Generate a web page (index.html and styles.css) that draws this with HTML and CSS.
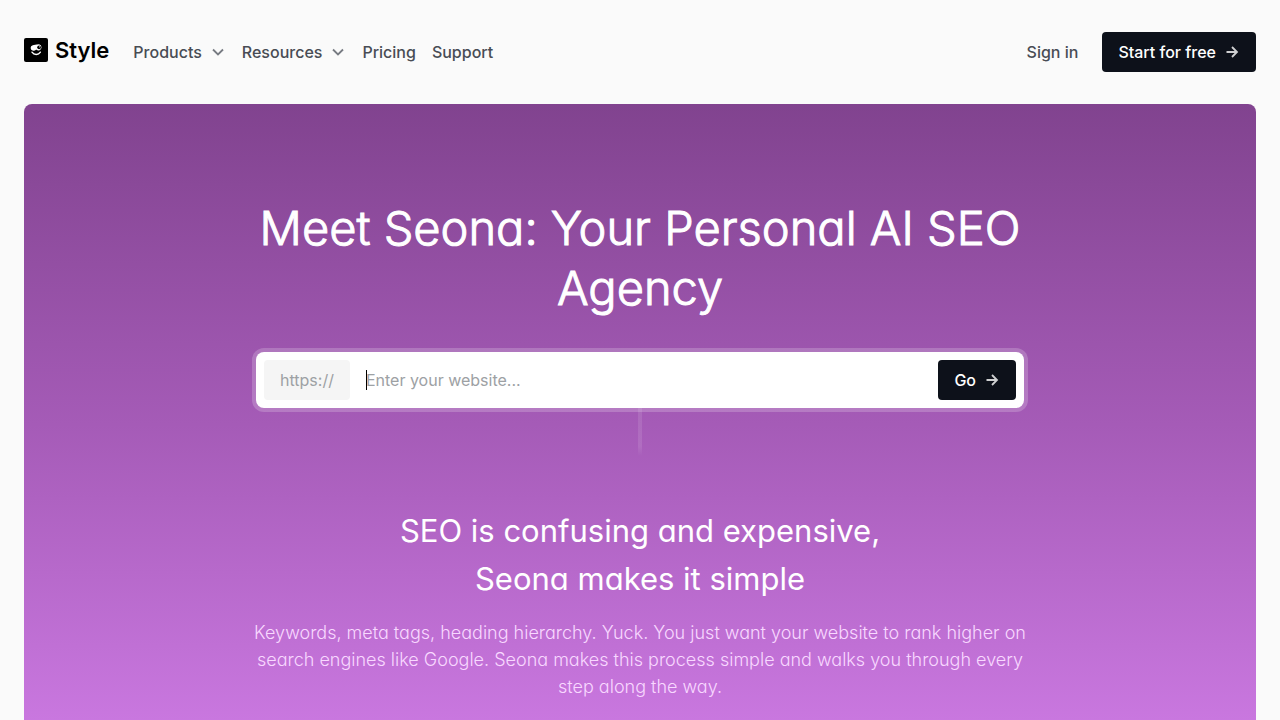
FILE: index.html
```html
<!DOCTYPE html>
<html lang="en">
<head>
<meta charset="utf-8">
<meta name="viewport" content="width=device-width, initial-scale=1">
<title>Style – Meet Seona</title>
<link rel="stylesheet" href="styles.css">
</head>
<body>
<header class="header">
  <a class="logo" href="#" aria-label="Style home">
    <svg class="logo-mark" viewBox="0 0 24 24" aria-hidden="true">
      <rect width="24" height="24" rx="2" fill="#000"/>
      <path d="M8.8 7.2C10.5 7.2 11.5 6.2 15 6.2A3.2 3.2 0 0 1 15.2 12.4C13.8 12.4 12.9 12 12.3 11.4C11.5 12.3 10.4 12.7 9 12.7A2.8 2.8 0 0 1 8.8 7.2Z" fill="#fff"/>
      <circle cx="15.1" cy="9.3" r="1.9" fill="#000"/>
      <circle cx="15.7" cy="8.8" r=".6" fill="#fff"/>
      <path d="M8 14.2C10 17.2 14.4 17.2 16.4 14.2" fill="none" stroke="#fff" stroke-width="1.4" stroke-linecap="round"/>
    </svg>
    <span class="logo-name">Style</span>
  </a>
  <nav class="nav" aria-label="Main">
    <button class="nav-item" type="button">Products
      <svg class="chevron" viewBox="0 0 16 16" aria-hidden="true"><path d="M3 5.5L8 10.5L13 5.5"/></svg>
    </button>
    <button class="nav-item" type="button">Resources
      <svg class="chevron" viewBox="0 0 16 16" aria-hidden="true"><path d="M3 5.5L8 10.5L13 5.5"/></svg>
    </button>
    <a class="nav-item" href="#">Pricing</a>
    <a class="nav-item" href="#">Support</a>
  </nav>
  <div class="account">
    <a class="nav-item" href="#">Sign in</a>
    <a class="button" href="#">Start for free
      <svg class="arrow" viewBox="0 0 16 16" aria-hidden="true"><path d="M2.5 8H13M8 3L13 8L8 13"/></svg>
    </a>
  </div>
</header>
<main class="hero">
  <div class="content">
    <h1 class="title">Meet Seona: Your Personal AI SEO Agency</h1>
    <form class="site-form">
      <label class="scheme" for="website">https://</label>
      <div class="field">
        <input class="website" id="website" type="text" placeholder="Enter your website...">
        <span class="caret"></span>
      </div>
      <button class="button" type="button">Go
        <svg class="arrow" viewBox="0 0 16 16" aria-hidden="true"><path d="M2.5 8H13M8 3L13 8L8 13"/></svg>
      </button>
    </form>
    <div class="connector"></div>
    <h2 class="subtitle">SEO is confusing and expensive,<br>Seona makes it simple</h2>
    <p class="description">Keywords, meta tags, heading hierarchy. Yuck. You just want your website to rank higher on search engines like Google. Seona makes this process simple and walks you through every step along the way.</p>
  </div>
</main>
</body>
</html>
```
FILE: styles.css
```css
* {
  box-sizing: border-box;
}

body {
  margin: 0;
  min-height: 100vh;
  display: flex;
  flex-direction: column;
  background: #fafafa;
  color: #484c54;
  font: 400 16px/24px Inter, "Liberation Sans", sans-serif;
}

a {
  color: inherit;
  text-decoration: none;
}

button,
input {
  font: inherit;
  border: 0;
  padding: 0;
  margin: 0;
  background: none;
}

.header {
  display: flex;
  align-items: center;
  gap: 24px;
  padding: 32px 24px;
}

.logo {
  display: flex;
  align-items: center;
  gap: 7px;
  color: #000;
}

.logo-mark {
  width: 24px;
  height: 24px;
  margin-bottom: 4px;
}

.logo-name {
  font-size: 22px;
  font-weight: 600;
  line-height: 24px;
  margin-bottom: 4px;
}

.nav {
  display: flex;
  gap: 16px;
}

.nav-item {
  display: flex;
  align-items: center;
  gap: 8px;
  color: #484c54;
  font-weight: 500;
}

.chevron,
.arrow {
  width: 16px;
  height: 16px;
  fill: none;
  stroke: #777b82;
  stroke-width: 1.8;
}

.account {
  display: flex;
  align-items: center;
  gap: 24px;
  margin-left: auto;
}

.button {
  display: flex;
  align-items: center;
  gap: 8px;
  height: 40px;
  padding: 0 16px;
  border-radius: 4px;
  background: #0d111a;
  color: #fff;
  font-weight: 500;
}

.arrow {
  stroke: #cfd0d2;
}

.hero {
  flex: 1;
  margin: 0 24px;
  padding: 94px 24px 20px;
  border-radius: 8px 8px 0 0;
  background: linear-gradient(#81438f, #a55bb7 52%, #c977df);
  color: #fff;
  text-align: center;
}

.content {
  max-width: 768px;
  margin: 0 auto;
}

.title {
  margin: 0 -8px;
  font-size: 47px;
  font-weight: 300;
  line-height: 60px;
  font-feature-settings: "cv11";
  -webkit-text-stroke: 1px #fff;
}

.site-form {
  display: flex;
  margin-top: 34px;
  padding: 8px;
  border-radius: 8px;
  background: #fff;
  box-shadow: 0 0 0 4px rgba(255, 255, 255, 0.2);
}

.scheme {
  padding: 8px 16px;
  border-radius: 4px;
  background: #f5f5f5;
  color: #9da1a4;
}

.field {
  position: relative;
  flex: 1;
  display: flex;
}

.website {
  width: 100%;
  padding: 8px 16px;
  outline: none;
}

.website::placeholder {
  color: #9da1a4;
  opacity: 1;
}

.caret {
  position: absolute;
  left: 16px;
  top: 10px;
  width: 1px;
  height: 20px;
  background: #000;
}

.connector {
  width: 4px;
  height: 48px;
  margin: 0 auto;
  background: linear-gradient(rgba(255, 255, 255, 0.1) 80%, rgba(255, 255, 255, 0));
}

.subtitle {
  margin: 51px 0 0;
  font-size: 31px;
  font-weight: 400;
  line-height: 48px;
  font-feature-settings: "cv11";
}

.description {
  margin: 16px -8px 0;
  color: #f8d8ff;
  font-size: 18px;
  font-weight: 300;
  line-height: 27px;
  font-feature-settings: "cv11";
}
```
